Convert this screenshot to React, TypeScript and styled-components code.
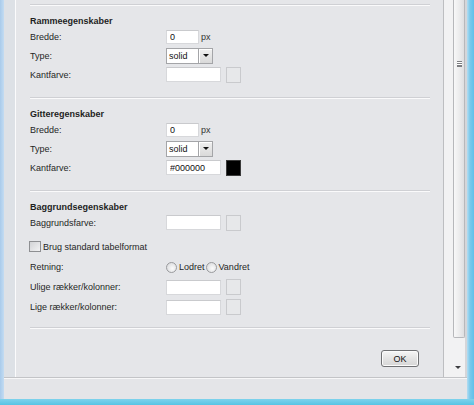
import React from "react";
import styled, { createGlobalStyle } from "styled-components";

const Global = createGlobalStyle`
  html, body { margin: 0; padding: 0; }
  body {
    font-family: "Liberation Sans", Arial, sans-serif;
    font-size: 9px;
    color: #222;
    background: #e5e6e9;
  }
  * { box-sizing: border-box; }
`;

const Window = styled.div`
  width: 474px;
  height: 405px;
  display: flex;
  flex-direction: column;
  overflow: hidden;
`;

const Body = styled.div`
  flex: 1;
  display: flex;
  min-height: 0;
`;

const LeftEdge = styled.div`
  width: 4px;
  background: linear-gradient(to right, #a9cbeb, #c3dcf2);
`;

const RightEdge = styled.div`
  width: 7px;
  background: linear-gradient(to right, #b4dcf1, #7ccaec 40%, #62c0e9);
`;

const BottomEdge = styled.div`
  height: 6px;
  background: linear-gradient(to bottom, #7fd2ec, #56c4e4);
`;

const Center = styled.div`
  flex: 1;
  display: flex;
  flex-direction: column;
  min-width: 0;
`;

const Workspace = styled.div`
  flex: 1;
  display: flex;
  min-height: 0;
`;

const Gutter = styled.div`
  width: 12px;
  background: #dde1e6;
  border-right: 1px solid #fbfbfc;
`;

const Panel = styled.div`
  flex: 1;
  background: #e5e6e9;
  display: flex;
  flex-direction: column;
  padding: 4px 13px 0 14px;
`;

const Separator = styled.div`
  height: 2px;
  border-top: 1px solid #cfd0d4;
  border-bottom: 1px solid #fafafb;
`;

const Section = styled.div<{ $pb?: number }>`
  padding: 9px 0 ${(p) => p.$pb ?? 13}px;
  display: flex;
  flex-direction: column;
`;

const Heading = styled.div`
  height: 12px;
  line-height: 12px;
  font-weight: bold;
  color: #1e1e1e;
`;

const Row = styled.div<{ $h?: number; $pt?: number }>`
  height: ${(p) => p.$h ?? 19}px;
  padding-top: ${(p) => p.$pt ?? 0}px;
  display: grid;
  grid-template-columns: 136px auto;
  align-items: center;
`;

const Label = styled.span`
  color: #262626;
`;

const Field = styled.div`
  display: flex;
  align-items: center;
`;

const TextBox = styled.input<{ $w: number; $hgt?: number }>`
  width: ${(p) => p.$w}px;
  height: ${(p) => p.$hgt ?? 15}px;
  margin: 0;
  padding: 0 0 0 3px;
  border: 1px solid #d7d8db;
  border-top-color: #c9cacd;
  background: #ffffff;
  font: inherit;
  color: #111;
  outline: none;
`;

const Unit = styled.span`
  margin-left: 2px;
  color: #333;
`;

const Swatch = styled.span<{ $color?: string }>`
  display: inline-block;
  width: 15px;
  height: 16px;
  margin-left: 5px;
  background: ${(p) => p.$color ?? "#e7e8ea"};
  border: 1px solid ${(p) => (p.$color ? "#3a3a3a" : "#c9cacd")};
`;

const Select = styled.div`
  width: 47px;
  height: 16px;
  display: flex;
  border: 1px solid #a4a5a8;
  background: #fff;
`;

const SelectText = styled.span`
  flex: 1;
  padding-left: 2px;
  line-height: 14px;
  color: #111;
`;

const SelectButton = styled.span`
  width: 14px;
  height: 14px;
  display: flex;
  align-items: center;
  justify-content: center;
  border-left: 1px solid #a4a5a8;
  background: linear-gradient(#f0f0f0, #d9d9d9);
  box-shadow: inset 1px 1px 0 #fff;
`;

const Caret = styled.span`
  width: 0;
  height: 0;
  border-left: 3px solid transparent;
  border-right: 3px solid transparent;
  border-top: 3px solid #111;
`;

const CheckRow = styled.label`
  display: flex;
  align-items: center;
  gap: 2px;
`;

const CheckBox = styled.span`
  width: 12px;
  height: 11px;
  margin-left: -1px;
  border: 1px solid #8e8f92;
  background: linear-gradient(135deg, #d2d3d6, #f2f2f3);
`;

const RadioGroup = styled.div`
  display: flex;
  align-items: center;
`;

const Radio = styled.span`
  width: 11px;
  height: 11px;
  border-radius: 50%;
  border: 1px solid #9a9b9e;
  background: radial-gradient(circle at 60% 60%, #fbfbfb, #d4d5d8);
  margin-right: 2px;
`;

const RadioText = styled.span`
  margin-right: 1px;
  color: #262626;
`;

const Footer = styled.div`
  flex: 1;
  display: flex;
  justify-content: flex-end;
  align-items: flex-start;
  padding: 21px 11px 0 0;
`;

const Button = styled.button`
  width: 38px;
  height: 17px;
  padding: 0;
  font: inherit;
  font-size: 9px;
  color: #111;
  border: 1px solid #707174;
  border-radius: 3px;
  background: linear-gradient(#f6f6f6, #e4e4e4 50%, #d6d6d6);
  box-shadow: inset 0 0 0 1px #fbfbfb;
`;

const Scrollbar = styled.div`
  width: 24px;
  display: flex;
  flex-direction: column;
  border-left: 1px solid #bdbec1;
  border-right: 2px solid #d5d6d9;
  background: #f2f2f3;
  padding-left: 9px;
`;

const Thumb = styled.div`
  width: 12px;
  height: 338px;
  border: 1px solid #b7b8bb;
  border-top: none;
  border-radius: 0 0 2px 2px;
  background: linear-gradient(to right, #f8f8f8, #eaeaeb 60%, #dedfe1);
  display: flex;
  flex-direction: column;
  align-items: center;
  padding-top: 61px;
`;

const Grip = styled.span`
  width: 5px;
  height: 6px;
  border-top: 1px solid #7d7e81;
  border-bottom: 1px solid #7d7e81;
  background: linear-gradient(#fff 0 1px, #7d7e81 1px 2px, #fff 2px 3px, #7d7e81 3px 4px, transparent 4px);
`;

const ArrowArea = styled.div`
  flex: 1;
  display: flex;
  align-items: flex-end;
  justify-content: center;
  padding: 0 2px 8px 0;
`;

const DownArrow = styled.span`
  width: 0;
  height: 0;
  border-left: 3px solid transparent;
  border-right: 3px solid transparent;
  border-top: 3px solid #3c3d40;
`;

const StatusBar = styled.div`
  height: 22px;
  border-top: 1px solid #c3c4c7;
  box-shadow: inset 0 1px 0 #f7f7f8;
  background: #e4e5e8;
`;

type RowDef = { label: string; kind: "num" | "select" | "color"; color?: string; text?: string };

const PropertyRow: React.FC<{ def: RowDef; h?: number }> = ({ def, h }) => (
  <Row $h={h}>
    <Label>{def.label}</Label>
    <Field>
      {def.kind === "num" && (
        <>
          <TextBox $w={33} $hgt={14} readOnly value="0" />
          <Unit>px</Unit>
        </>
      )}
      {def.kind === "select" && (
        <Select>
          <SelectText>solid</SelectText>
          <SelectButton>
            <Caret />
          </SelectButton>
        </Select>
      )}
      {def.kind === "color" && (
        <>
          <TextBox $w={55} readOnly value={def.text ?? ""} />
          <Swatch $color={def.color} />
        </>
      )}
    </Field>
  </Row>
);

export default function App() {
  return (
    <Window>
      <Global />
      <Body>
        <LeftEdge />
        <Center>
          <Workspace>
            <Gutter />
            <Panel>
              <Separator />
              <Section>
                <Heading>Rammeegenskaber</Heading>
                <PropertyRow def={{ label: "Bredde:", kind: "num" }} />
                <PropertyRow def={{ label: "Type:", kind: "select" }} />
                <PropertyRow def={{ label: "Kantfarve:", kind: "color" }} />
              </Section>
              <Separator />
              <Section>
                <Heading>Gitteregenskaber</Heading>
                <PropertyRow def={{ label: "Bredde:", kind: "num" }} />
                <PropertyRow def={{ label: "Type:", kind: "select" }} />
                <PropertyRow def={{ label: "Kantfarve:", kind: "color", text: "#000000", color: "#000000" }} />
              </Section>
              <Separator />
              <Section $pb={10}>
                <Heading>Baggrundsegenskaber</Heading>
                <PropertyRow def={{ label: "Baggrundsfarve:", kind: "color" }} />
                <Row $h={25} $pt={4}>
                  <CheckRow>
                    <CheckBox />
                    <Label>Brug standard tabelformat</Label>
                  </CheckRow>
                </Row>
                <Row $h={20}>
                  <Label>Retning:</Label>
                  <RadioGroup>
                    <Radio />
                    <RadioText>Lodret</RadioText>
                    <Radio />
                    <RadioText>Vandret</RadioText>
                  </RadioGroup>
                </Row>
                <PropertyRow h={20} def={{ label: "Ulige rækker/kolonner:", kind: "color" }} />
                <PropertyRow h={20} def={{ label: "Lige rækker/kolonner:", kind: "color" }} />
              </Section>
              <Separator />
              <Footer>
                <Button>OK</Button>
              </Footer>
            </Panel>
            <Scrollbar>
              <Thumb>
                <Grip />
              </Thumb>
              <ArrowArea>
                <DownArrow />
              </ArrowArea>
            </Scrollbar>
          </Workspace>
          <StatusBar />
        </Center>
        <RightEdge />
      </Body>
      <BottomEdge />
    </Window>
  );
}
